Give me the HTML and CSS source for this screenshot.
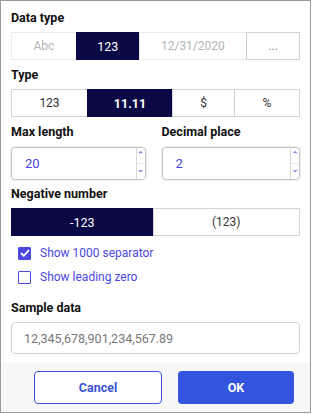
FILE: index.html
```html
<!DOCTYPE html>
<html lang="en">
<head>
    <meta charset="UTF-8">
    <meta name="viewport" content="width=device-width, initial-scale=1.0">
    <title>Number format</title>
    <link rel="stylesheet" href="styles.css">
</head>
<body>
    <div class="dialog">
        <div class="content">
            <div class="label">Data type</div>
            <div class="seg-row data-type">
                <div class="seg disabled w-abc">Abc</div>
                <div class="seg active w-num">123</div>
                <div class="seg disabled w-date">12/31/2020</div>
                <div class="seg more">...</div>
            </div>

            <div class="label">Type</div>
            <div class="seg-row type-row">
                <div class="seg w-t1">123</div>
                <div class="seg active w-t2">11.11</div>
                <div class="seg w-t3">$</div>
                <div class="seg w-t4">%</div>
            </div>

            <div class="two-col">
                <div class="col">
                    <div class="label">Max length</div>
                    <div class="spinner">
                        <span class="spin-value">20</span>
                        <div class="spin-btns">
                            <span class="arrow">&#8963;</span>
                            <span class="arrow down">&#8964;</span>
                        </div>
                    </div>
                </div>
                <div class="col">
                    <div class="label">Decimal place</div>
                    <div class="spinner">
                        <span class="spin-value">2</span>
                        <div class="spin-btns">
                            <span class="arrow">&#8963;</span>
                            <span class="arrow down">&#8964;</span>
                        </div>
                    </div>
                </div>
            </div>

            <div class="label">Negative number</div>
            <div class="seg-row neg-row">
                <div class="seg active half">-123</div>
                <div class="seg half">(123)</div>
            </div>

            <div class="checks">
                <label class="check-row">
                    <span class="box checked">
                        <svg width="10" height="8" viewBox="0 0 10 8"><path d="M1 4l2.8 2.8L9 1.2" fill="none" stroke="#fff" stroke-width="1.8"/></svg>
                    </span>
                    Show 1000 separator
                </label>
                <label class="check-row">
                    <span class="box"></span>
                    Show leading zero
                </label>
            </div>

            <div class="label sample-label">Sample data</div>
            <div class="sample">12,345,678,901,234,567.89</div>
        </div>

        <div class="footer">
            <button class="btn cancel">Cancel</button>
            <button class="btn ok">OK</button>
        </div>
    </div>
</body>
</html>
```

FILE: styles.css
```css
body {
    margin: 0;
    padding: 0;
    font-family: Roboto, "Liberation Sans", Arial, sans-serif;
    background-color: #fff;
}
.dialog {
    width: 311px;
    height: 413px;
    box-sizing: border-box;
    border: 1px solid #9a9a9a;
    background-color: #fff;
    display: flex;
    flex-direction: column;
}
.content {
    padding: 9px 10px 0 10px;
    flex: 1;
}
.label {
    font-size: 12.5px;
    font-weight: bold;
    color: #111;
    line-height: 16px;
    margin-bottom: 6px;
}
.seg-row {
    display: flex;
    height: 28px;
    margin-bottom: 7px;
}
.seg {
    box-sizing: border-box;
    display: flex;
    align-items: center;
    justify-content: center;
    font-size: 12px;
    color: #333;
    border: 1px solid #d4d4d4;
    margin-left: -1px;
    background-color: #fff;
}
.seg:first-child {
    margin-left: 0;
}
.seg.active {
    background-color: #0b0945;
    border-color: #0b0945;
    color: #fff;
    font-weight: bold;
    font-size: 12.5px;
}
.seg.disabled {
    color: #b4b4b4;
    border-color: #ececec;
}
.data-type .seg.active {
    font-weight: normal;
}
.seg.more {
    color: #888;
    border-color: #d0d0d0;
    width: 54px;
}
.w-abc { width: 66px; }
.w-num { width: 64px; }
.w-date { width: 109px; }
.w-t1 { width: 77px; }
.w-t2 { width: 86px; }
.w-t3 { width: 63px; }
.w-t4 { width: 66px; }
.neg-row .seg.active {
    font-weight: normal;
}
.half {
    width: 143px;
}
.neg-row .half:last-child {
    width: 148px;
}
.two-col {
    display: flex;
    gap: 16px;
}
.two-col .label {
    margin-bottom: 7px;
}
.two-col .col:first-child {
    width: 135px;
}
.two-col .col:last-child {
    width: 139px;
}
.spinner {
    box-sizing: border-box;
    height: 33px;
    border: 1px solid #c8c8c8;
    border-radius: 4px;
    box-shadow: 0 0 0 1px #ededed;
    display: flex;
    align-items: center;
    margin-bottom: 6px;
}
.spin-value {
    flex: 1;
    padding-left: 13px;
    font-size: 13px;
    color: #4343e0;
}
.spin-btns {
    width: 8px;
    height: 100%;
    border-left: 1px solid #d8d8d8;
    display: flex;
    flex-direction: column;
}
.arrow {
    flex: 1;
    font-size: 9px;
    line-height: 15px;
    color: #3a3ad8;
    text-align: center;
    overflow: hidden;
    font-family: "DejaVu Sans", sans-serif;
}
.arrow.down {
    border-top: 1px solid #e6e6e6;
    line-height: 10px;
}
.checks {
    padding-left: 7px;
    margin-top: -2px;
}
.check-row {
    display: flex;
    align-items: center;
    height: 24px;
    font-size: 12px;
    color: #4a48e0;
}
.box {
    box-sizing: border-box;
    width: 13px;
    height: 13px;
    border: 1.5px solid #4a48e0;
    border-radius: 1px;
    margin-right: 9px;
    display: flex;
    align-items: center;
    justify-content: center;
}
.box.checked {
    background-color: #4a48e0;
}
.sample-label {
    margin-top: 11px;
}
.sample {
    box-sizing: border-box;
    height: 32px;
    border: 1px solid #d0d0d0;
    border-radius: 4px;
    padding-left: 12px;
    display: flex;
    align-items: center;
    font-size: 12.5px;
    color: #777;
}
.footer {
    height: 49px;
    background-color: #f7f7f7;
    display: flex;
    align-items: center;
    gap: 16px;
    padding-left: 33px;
}
.btn {
    height: 33px;
    border-radius: 4px;
    font-family: Roboto, "Liberation Sans", Arial, sans-serif;
    font-weight: bold;
    font-size: 12.5px;
    cursor: pointer;
}
.cancel {
    width: 128px;
    background-color: #fff;
    border: 1px solid #3a55d8;
    color: #3a55d8;
}
.ok {
    width: 116px;
    background-color: #3355dd;
    border: none;
    color: #fff;
}
```
